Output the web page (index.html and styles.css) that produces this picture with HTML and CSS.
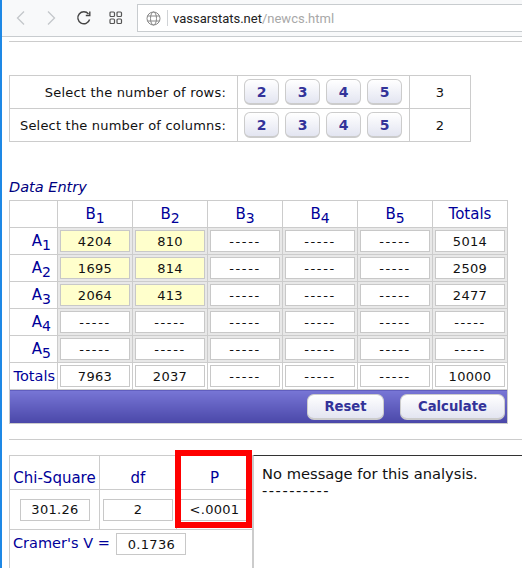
FILE: index.html
```html
<!DOCTYPE html>
<html lang="en">
<head>
    <meta charset="UTF-8">
    <title>Chi-Square</title>
    <link rel="stylesheet" href="styles.css">
</head>
<body>
    <div class="toolbar">
        <svg class="nav-icon nav-back" width="14" height="16" viewBox="0 0 14 16"><path d="M10 1.500 3.500 8l6.500 6.500" fill="none" stroke="#c4c7ca" stroke-width="1.300"/></svg>
        <svg class="nav-icon nav-fwd" width="14" height="16" viewBox="0 0 14 16"><path d="M4 1.500 10.500 8 4 14.500" fill="none" stroke="#c4c7ca" stroke-width="1.300"/></svg>
        <svg class="nav-icon nav-reload" width="16" height="16" viewBox="0 0 16 16"><path d="M13.600 9.500A6 6 0 1 1 12.500 4" fill="none" stroke="#444" stroke-width="1.400"/><path d="M13.800 1.500V5.500H9.800" fill="none" stroke="#444" stroke-width="1.400"/></svg>
        <svg class="nav-icon nav-tabs" width="14" height="14" viewBox="0 0 14 14"><g fill="none" stroke="#555" stroke-width="1.200"><rect x="1" y="1" width="4.500" height="4.500" rx="1"/><rect x="8" y="1" width="4.500" height="4.500" rx="1"/><rect x="1" y="8" width="4.500" height="4.500" rx="1"/><rect x="8" y="8" width="4.500" height="4.500" rx="1"/></g></svg>
        <div class="address">
            <svg width="15" height="15" viewBox="0 0 15 15"><g fill="none" stroke="#888" stroke-width="1"><circle cx="7.500" cy="7.500" r="6.500"/><ellipse cx="7.500" cy="7.500" rx="3" ry="6.500"/><path d="M1.500 5h12M1.500 10h12"/></g></svg>
            <span class="address-sep"></span>
            <span class="url">vassarstats.net<span class="url-path">/newcs.html</span></span>
        </div>
    </div>

    <hr class="rule first">

    <table class="select-table">
        <tr>
            <td class="select-label">Select the number of rows:</td>
            <td class="select-btns">
                <button class="num-btn">2</button>
                <button class="num-btn">3</button>
                <button class="num-btn">4</button>
                <button class="num-btn">5</button>
            </td>
            <td class="select-val">3</td>
        </tr>
        <tr>
            <td class="select-label">Select the number of columns:</td>
            <td class="select-btns">
                <button class="num-btn">2</button>
                <button class="num-btn">3</button>
                <button class="num-btn">4</button>
                <button class="num-btn">5</button>
            </td>
            <td class="select-val">2</td>
        </tr>
    </table>

    <div class="section-title">Data Entry</div>

    <table class="data-table">
        <tr class="head-row">
            <th class="row-head"></th>
            <th>B<sub>1</sub></th>
            <th>B<sub>2</sub></th>
            <th>B<sub>3</sub></th>
            <th>B<sub>4</sub></th>
            <th>B<sub>5</sub></th>
            <th>Totals</th>
        </tr>
        <tr>
            <th class="row-head">A<sub>1</sub></th>
            <td><input class="cell filled" value="4204"></td>
            <td><input class="cell filled" value="810"></td>
            <td><input class="cell empty" value="-----"></td>
            <td><input class="cell empty" value="-----"></td>
            <td><input class="cell empty" value="-----"></td>
            <td><input class="cell" value="5014"></td>
        </tr>
        <tr>
            <th class="row-head">A<sub>2</sub></th>
            <td><input class="cell filled" value="1695"></td>
            <td><input class="cell filled" value="814"></td>
            <td><input class="cell empty" value="-----"></td>
            <td><input class="cell empty" value="-----"></td>
            <td><input class="cell empty" value="-----"></td>
            <td><input class="cell" value="2509"></td>
        </tr>
        <tr>
            <th class="row-head">A<sub>3</sub></th>
            <td><input class="cell filled" value="2064"></td>
            <td><input class="cell filled" value="413"></td>
            <td><input class="cell empty" value="-----"></td>
            <td><input class="cell empty" value="-----"></td>
            <td><input class="cell empty" value="-----"></td>
            <td><input class="cell" value="2477"></td>
        </tr>
        <tr>
            <th class="row-head">A<sub>4</sub></th>
            <td><input class="cell empty" value="-----"></td>
            <td><input class="cell empty" value="-----"></td>
            <td><input class="cell empty" value="-----"></td>
            <td><input class="cell empty" value="-----"></td>
            <td><input class="cell empty" value="-----"></td>
            <td><input class="cell empty" value="-----"></td>
        </tr>
        <tr>
            <th class="row-head">A<sub>5</sub></th>
            <td><input class="cell empty" value="-----"></td>
            <td><input class="cell empty" value="-----"></td>
            <td><input class="cell empty" value="-----"></td>
            <td><input class="cell empty" value="-----"></td>
            <td><input class="cell empty" value="-----"></td>
            <td><input class="cell empty" value="-----"></td>
        </tr>
        <tr class="totals-row">
            <th class="row-head totals-head">Totals</th>
            <td><input class="cell" value="7963"></td>
            <td><input class="cell" value="2037"></td>
            <td><input class="cell empty" value="-----"></td>
            <td><input class="cell empty" value="-----"></td>
            <td><input class="cell empty" value="-----"></td>
            <td><input class="cell" value="10000"></td>
        </tr>
        <tr>
            <td class="action-bar" colspan="7">
                <div class="actions">
                    <button class="act-btn reset">Reset</button>
                    <button class="act-btn calc">Calculate</button>
                </div>
            </td>
        </tr>
    </table>

    <hr class="rule second">

    <div class="results">
        <table class="result-table">
            <tr class="result-head">
                <th class="col-chi">Chi-Square</th>
                <th class="col-df">df</th>
                <th class="col-p">P</th>
            </tr>
            <tr class="result-vals">
                <td><input class="cell result-cell chi" value="301.26"></td>
                <td><input class="cell result-cell" value="2"></td>
                <td><input class="cell result-cell" value="&lt;.0001"></td>
            </tr>
            <tr>
                <td class="cramer" colspan="3">Cramer's V = <input class="cell result-cell" value="0.1736"></td>
            </tr>
        </table>
        <div class="message">
            No message for this analysis.<br>
            <span class="dashes">----------</span>
        </div>
        <div class="highlight-box"></div>
    </div>
</body>
</html>
```

FILE: styles.css
```css
html {
    overflow: hidden;
}

body {
    margin: 0;
    height: 568px;
    overflow: hidden;
    background: #fff;
    border-left: 2px solid #1e88e5;
    font-family: "DejaVu Sans", Verdana, sans-serif;
    color: #111;
}

.toolbar {
    display: flex;
    align-items: center;
    height: 36px;
    background: #f8f9fa;
    border-bottom: 1px solid #c8cccf;
    padding-left: 12px;
}

.nav-icon {
    flex: none;
}

.nav-back {
    margin-right: 16px;
}

.nav-fwd {
    margin-right: 18px;
}

.nav-reload {
    margin-right: 17px;
}

.nav-tabs {
    margin-right: 14px;
}

.address {
    display: flex;
    align-items: center;
    flex: 1;
    height: 26px;
    padding-left: 8px;
    background: #fff;
    border: 1px solid #c8cccf;
    border-right: none;
}

.address-sep {
    width: 1px;
    height: 16px;
    background: #d0d3d6;
    margin: 0 5px 0 6px;
}

.url {
    font-family: Roboto, sans-serif;
    font-size: 13px;
    color: #222;
}

.url-path {
    color: #a8a8a8;
}

.rule {
    border: none;
    height: 1px;
    background: #ccc;
    margin: 0;
}

.rule.first {
    margin: 4px 0 0 7px;
}

.rule.second {
    margin: 15px 0 0 7px;
}

table {
    border-collapse: collapse;
    table-layout: fixed;
}

td, th {
    box-sizing: border-box;
    border: 1px solid #ccc;
    padding: 0;
}

.select-table {
    margin: 33px 0 0 7px;
    width: 462px;
}

.select-table tr {
    height: 33px;
}

.select-label {
    width: 228px;
    padding-right: 11px;
    text-align: right;
    font-size: 13px;
    letter-spacing: 0.2px;
}

.select-btns {
    width: 172px;
    padding-left: 6px;
    font-size: 0;
}

.select-val {
    text-align: center;
    font-size: 13px;
}

.num-btn {
    width: 35px;
    height: 26px;
    margin-right: 6px;
    padding: 0;
    border: 1px solid #ccc;
    border-bottom-width: 2px;
    border-radius: 6px;
    background: linear-gradient(#fff, #e3e5f1);
    color: #333399;
    font-family: inherit;
    font-size: 14px;
    font-weight: bold;
}

.section-title {
    margin: 37px 0 0 7px;
    height: 21px;
    font-size: 14.5px;
    line-height: 17px;
    font-style: italic;
    color: #000080;
}

.data-table {
    margin-left: 7px;
    width: 498px;
}

.data-table th {
    width: 75px;
    height: 27px;
    font-size: 15px;
    font-weight: normal;
    color: #000099;
}

.data-table .row-head {
    width: 48px;
    text-align: right;
    padding-right: 6px;
}

.data-table .totals-head {
    padding-right: 2px;
    font-size: 14.5px;
}

.data-table th sub {
    font-size: 14px;
    line-height: 0;
}

.data-table td {
    height: 27px;
    background: #e8e8e8;
    text-align: center;
}

.data-table .totals-row td {
    background: #fff;
}

.cell {
    display: block;
    width: 70px;
    height: 22px;
    margin: 0 auto;
    padding: 0;
    box-sizing: border-box;
    border: 1px solid #c8c8c8;
    background: #fff;
    color: #111;
    font-family: inherit;
    font-size: 13px;
    letter-spacing: 0.3px;
    text-align: center;
}

.cell.filled {
    background: #ffffcc;
}

.cell.empty {
    letter-spacing: 1.600px;
}

.data-table .action-bar {
    height: 34px;
    background: linear-gradient(#7876d6, #4a47a8);
}

.actions {
    display: flex;
    justify-content: flex-end;
    gap: 16px;
    padding-right: 2px;
}

.act-btn {
    height: 26px;
    padding: 0;
    border: 1px solid #ccc;
    border-bottom-width: 2px;
    border-radius: 7px;
    background: linear-gradient(#fff, #e3e5f1);
    color: #333399;
    font-family: inherit;
    font-size: 13.200px;
    font-weight: bold;
}

.act-btn.reset {
    width: 77px;
}

.act-btn.calc {
    width: 105px;
}

.results {
    position: relative;
    display: flex;
    align-items: flex-start;
    margin: 15px 0 0 7px;
}

.result-table {
    width: 244px;
    flex: none;
}

.result-head {
    height: 34px;
}

.result-head th {
    font-size: 15px;
    font-weight: normal;
    color: #000099;
    vertical-align: bottom;
    padding-bottom: 2px;
}

.col-chi {
    width: 90px;
}

.col-df {
    width: 77px;
}

.result-vals {
    height: 40px;
}

.result-table .result-cell {
    width: 70px;
}

.result-vals .chi {
    margin-left: 10px;
}

.cramer {
    height: 60px;
    vertical-align: top;
    padding: 3px 0 0 3px;
    font-size: 14.500px;
    color: #000099;
}

.cramer .cell {
    display: inline-block;
    margin: 0 0 0 2px;
    vertical-align: middle;
}

.message {
    flex: 1;
    height: 120px;
    border-top: 1px solid #333;
    border-left: 1px solid #ccc;
    padding: 9px 0 0 8px;
    font-size: 14.700px;
    line-height: 17px;
    color: #111;
}

.dashes {
    letter-spacing: 1.500px;
}

.highlight-box {
    position: absolute;
    left: 166px;
    top: -5px;
    width: 77px;
    height: 78px;
    box-sizing: border-box;
    border: 6px solid #f00;
}
```
